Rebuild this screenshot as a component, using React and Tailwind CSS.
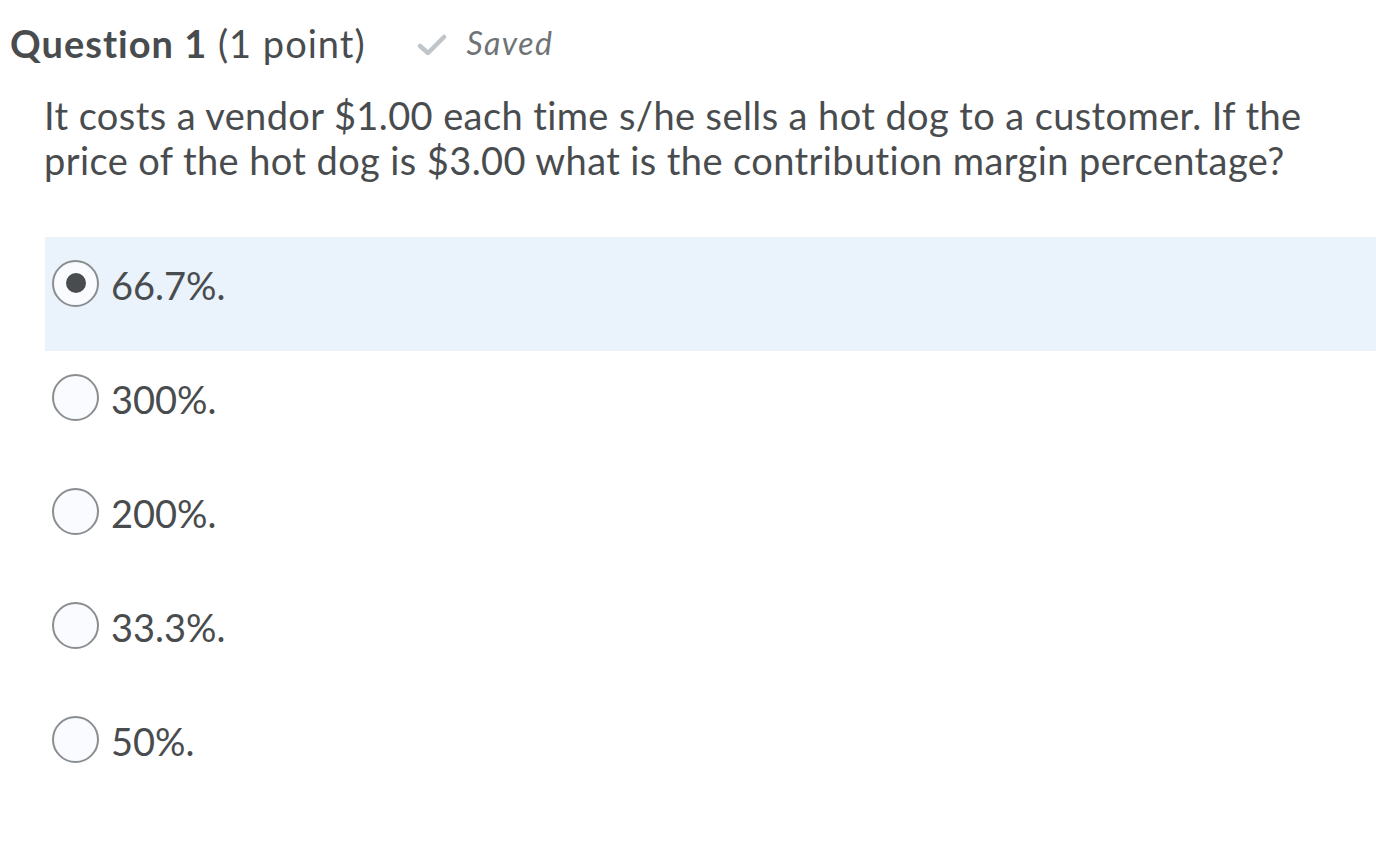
import React from "react";

const options = ["66.7%.", "300%.", "200%.", "33.3%.", "50%."];

export default function App() {
  return (
    <div
      className="min-h-[846px] w-[1376px] bg-white text-[#494c4e] [font-variant-ligatures:none]"
      style={{ fontFamily: "Lato, 'Noto Sans', sans-serif" }}
    >
      <div className="flex items-start pl-[10px] pt-[21px]">
        <h2 className="text-[38px] leading-[44px] tracking-[1px]">
          <span className="font-bold">Question 1</span> <span className="font-normal">(1 point)</span>
        </h2>
        <div className="ml-[51px] mt-[2px] flex items-start">
          <svg width="30" height="22" viewBox="0 0 30 22" className="mt-[11px] text-[#c0c5c9]">
            <path d="M3 12 L11 19 L27 3" fill="none" stroke="currentColor" strokeWidth="4.5" strokeLinecap="round" strokeLinejoin="round" />
          </svg>
          <span className="ml-[20px] italic text-[32px] leading-[40px] tracking-[1.4px] text-[#6e7376]">Saved</span>
        </div>
      </div>
      <p className="pl-[44px] pr-[40px] mt-[28px] text-[38px] leading-[45px] tracking-[0.4px]">
        It costs a vendor $1.00 each time s/he sells a hot dog to a customer. If the price of the hot dog is $3.00 what is the contribution margin percentage?
      </p>
      <div className="ml-[45px] mt-[54px] flex flex-col">
        {options.map((o, i) => (
          <div
            key={o}
            className={`flex items-center h-[114px] pl-[7px] pb-[22px] ${i === 0 ? "bg-[#eaf2fc]" : ""}`}
          >
            <span className="flex items-center justify-center w-[47px] h-[47px] rounded-full border-2 border-[#8b8e90] bg-[#f9fbff]">
              {i === 0 && <span className="w-[20px] h-[20px] rounded-full bg-[#494c4e]" />}
            </span>
            <span className="ml-[12px] text-[38px] leading-[46px] mt-[4px]">{o}</span>
          </div>
        ))}
      </div>
    </div>
  );
}
